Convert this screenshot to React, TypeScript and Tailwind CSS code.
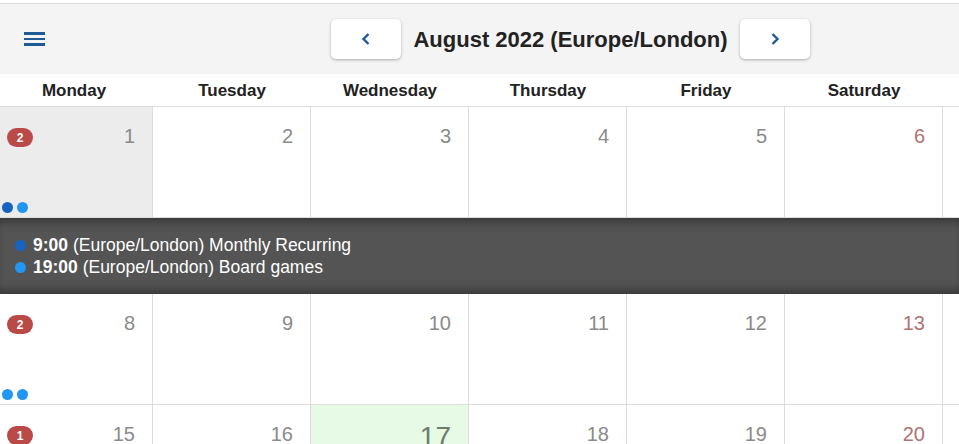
import React from "react";

type Day = { n: number; badge?: number; dots?: string[]; sat?: boolean; today?: boolean; gray?: boolean };

const weeks: Day[][] = [
  [
    { n: 1, badge: 2, dots: ["#1565c0", "#2196f3"], gray: true },
    { n: 2 },
    { n: 3 },
    { n: 4 },
    { n: 5 },
    { n: 6, sat: true },
    { n: 7 },
  ],
  [
    { n: 8, badge: 2, dots: ["#2196f3", "#2196f3"] },
    { n: 9 },
    { n: 10 },
    { n: 11 },
    { n: 12 },
    { n: 13, sat: true },
    { n: 14 },
  ],
  [
    { n: 15, badge: 1 },
    { n: 16 },
    { n: 17, today: true },
    { n: 18 },
    { n: 19 },
    { n: 20, sat: true },
    { n: 21 },
  ],
];

const dayNames = ["Monday", "Tuesday", "Wednesday", "Thursday", "Friday", "Saturday", "Sunday"];

function Cell({ d }: { d: Day }) {
  const bg = d.today ? "bg-[#e6fae6]" : d.gray ? "bg-[#ececec]" : "bg-white";
  const numColor = d.today ? "text-[#6c7d6c]" : d.sat ? "text-[#b07272]" : "text-[#8a8a8a]";
  return (
    <div className={`${bg} border-r border-[#dcdcdc] flex flex-col justify-between`}>
      <div className={`flex justify-between items-start pl-[12px] pr-[17px] ${d.today ? "pt-[18px]" : "pt-[15px]"}`}>
        <div>
          {d.badge ? (
            <div className="mt-[6px] h-[19px] w-[26px] rounded-full bg-[#b94a48] text-white text-[12px] font-bold flex items-center justify-center leading-none">
              {d.badge}
            </div>
          ) : null}
        </div>
        <div className={`${numColor} ${d.today ? "text-[28px] leading-[28px]" : "text-[20px] leading-[28px]"}`}>{d.n}</div>
      </div>
      <div className="flex gap-[4px] pl-[7px] pb-[4px]">
        {(d.dots || []).map((c, i) => (
          <span key={i} className="block shrink-0 w-[11px] h-[11px] rounded-full" style={{ backgroundColor: c }} />
        ))}
      </div>
    </div>
  );
}

function Week({ days }: { days: Day[] }) {
  return (
    <div className="ml-[-5px] w-[1106px] h-[111px] grid grid-cols-7 border-b border-[#dcdcdc]">
      {days.map((d) => (
        <Cell key={d.n} d={d} />
      ))}
    </div>
  );
}

export default function App() {
  return (
    <div className="w-[959px] h-[444px] overflow-hidden bg-white font-['Liberation_Sans',Arial,sans-serif]">
      <div className="h-[3px] bg-white" />
      <div className="w-[1141px] h-[71px] border-t border-[#dcdcdc] bg-[#f4f4f4] grid grid-cols-[1fr_auto_1fr] items-center">
        <div className="pl-[24px]">
          <div className="flex flex-col gap-[3px] w-[21px]">
            <span className="block h-[2.5px] bg-[#1d5a96]" />
            <span className="block h-[2.5px] bg-[#1d5a96]" />
            <span className="block h-[2.5px] bg-[#1d5a96]" />
          </div>
        </div>
        <div className="flex items-center gap-[12px]">
          <button className="w-[70px] h-[40px] bg-white rounded-[5px] shadow-[0_1px_3px_rgba(0,0,0,0.3)] flex items-center justify-center">
            <svg width="12" height="14" viewBox="0 0 12 14">
              <path d="M8.5 2 L3.5 7 L8.5 12" fill="none" stroke="#1d5a96" strokeWidth="2.4" />
            </svg>
          </button>
          <div className="text-[22px] font-bold text-[#222]">August 2022 (Europe/London)</div>
          <button className="w-[70px] h-[40px] bg-white rounded-[5px] shadow-[0_1px_3px_rgba(0,0,0,0.3)] flex items-center justify-center">
            <svg width="12" height="14" viewBox="0 0 12 14">
              <path d="M3.5 2 L8.5 7 L3.5 12" fill="none" stroke="#1d5a96" strokeWidth="2.4" />
            </svg>
          </button>
        </div>
        <div />
      </div>
      <div className="ml-[-5px] w-[1106px] h-[33px] grid grid-cols-7 border-b border-[#dcdcdc] bg-white">
        {dayNames.map((n) => (
          <div key={n} className="flex items-center justify-center pt-[2px] text-[17px] font-bold text-[#222]">
            {n}
          </div>
        ))}
      </div>
      <Week days={weeks[0]} />
      <div className="h-[76px] bg-[#545454] shadow-[inset_0_10px_10px_-6px_rgba(0,0,0,0.35),inset_0_-10px_10px_-6px_rgba(0,0,0,0.35)] pl-[15px] pt-[16px] text-white text-[17.5px] leading-[22px]">
        <div className="flex items-center">
          <span className="block shrink-0 w-[11px] h-[11px] rounded-full bg-[#1565c0] mr-[7px]" />
          <span>
            <b>9:00</b> (Europe/London) Monthly Recurring
          </span>
        </div>
        <div className="flex items-center">
          <span className="block shrink-0 w-[11px] h-[11px] rounded-full bg-[#2196f3] mr-[7px]" />
          <span>
            <b>19:00</b> (Europe/London) Board games
          </span>
        </div>
      </div>
      <Week days={weeks[1]} />
      <Week days={weeks[2]} />
    </div>
  );
}
